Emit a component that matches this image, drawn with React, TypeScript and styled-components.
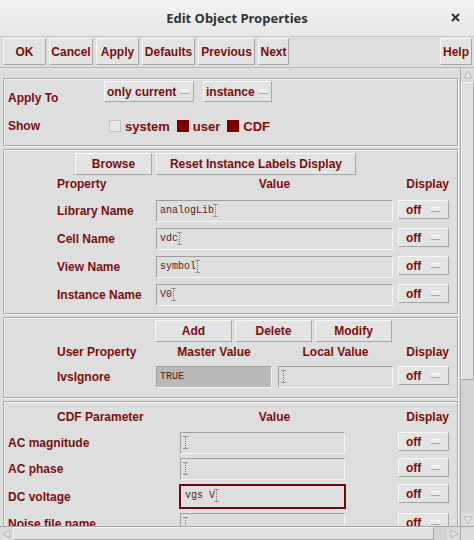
import styled, { createGlobalStyle } from "styled-components";

const RED = "#7a0e0e";
const PANEL = "#dedede";

const GlobalStyle = createGlobalStyle`
  html, body {
    margin: 0;
    padding: 0;
    background: ${PANEL};
  }
  body {
    font-family: "Liberation Sans", Arial, sans-serif;
  }
`;

const toolButtons: [string, number][] = [
  ["OK", 43],
  ["Cancel", 44],
  ["Apply", 43],
  ["Defaults", 53],
  ["Previous", 57],
  ["Next", 31],
];

const instanceRows = [
  { label: "Library Name", value: "analogLib" },
  { label: "Cell Name", value: "vdc" },
  { label: "View Name", value: "symbol" },
  { label: "Instance Name", value: "V0" },
];

const cdfRows = [
  { label: "AC magnitude", value: "", focused: false },
  { label: "AC phase", value: "", focused: false },
  { label: "DC voltage", value: "vgs V", focused: true },
  { label: "Noise file name", value: "", focused: false },
];

const Arrow = ({ dir }: { dir: "up" | "down" | "left" | "right" }) => {
  const pts = {
    up: "2,9 6,2 10,9",
    down: "2,3 6,10 10,3",
    left: "9,2 2,6 9,10",
    right: "3,2 10,6 3,10",
  }[dir];
  return (
    <svg width="12" height="12" viewBox="0 0 12 12">
      <polygon points={pts} fill="#e4e4e4" stroke="#b4b4b4" strokeWidth="1" />
    </svg>
  );
};

const Cursor = () => <IBeam />;

const App = () => {
  return (
    <Window>
      <GlobalStyle />
      <TitleBar>
        <Title>Edit Object Properties</Title>
        <Close>
          <svg width="9" height="9" viewBox="0 0 9 9">
            <path d="M1 1 L8 8 M8 1 L1 8" stroke="#2e3436" strokeWidth="2" />
          </svg>
        </Close>
      </TitleBar>

      <Toolbar>
        {toolButtons.map(([label, w]) => (
          <ToolButton key={label} $w={w}>
            {label}
          </ToolButton>
        ))}
        <ToolButton $w={32} $push>
          Help
        </ToolButton>
      </Toolbar>

      <Body>
        <Viewport>
          <Section $h={68}>
            <ApplyRow>
              <ApplyLabel>Apply To</ApplyLabel>
              <Combo $w={90}>
                only current
                <ComboMark />
              </Combo>
              <Combo $w={69} $gap={9}>
                instance
                <ComboMark />
              </Combo>
            </ApplyRow>
            <ShowRow>
              <ShowLabel>Show</ShowLabel>
              <Check>
                <Box />
                system
              </Check>
              <Check>
                <Box $on />
                user
              </Check>
              <Check>
                <Box $on />
                CDF
              </Check>
            </ShowRow>
          </Section>

          <Section $h={165}>
            <ButtonRow $pad={71} $gap={4} $top={3}>
              <PanelButton $w={77}>Browse</PanelButton>
              <PanelButton $w={200}>Reset Instance Labels Display</PanelButton>
            </ButtonRow>
            <HeaderRow>
              <HeadLabel>Property</HeadLabel>
              <HeadValue>Value</HeadValue>
              <HeadDisplay>Display</HeadDisplay>
            </HeaderRow>
            <Rows $gap={6} $top={6}>
              {instanceRows.map((r) => (
                <PropRow key={r.label}>
                  <RowLabel>{r.label}</RowLabel>
                  <Field $w={237}>
                    {r.value}
                    <Cursor />
                  </Field>
                  <OffButton>
                    off
                    <ComboMark />
                  </OffButton>
                </PropRow>
              ))}
            </Rows>
          </Section>

          <Section $h={81}>
            <ButtonRow $pad={151} $gap={3} $top={2}>
              <PanelButton $w={77}>Add</PanelButton>
              <PanelButton $w={77}>Delete</PanelButton>
              <PanelButton $w={77}>Modify</PanelButton>
            </ButtonRow>
            <UserHeader>
              <HeadLabel>User Property</HeadLabel>
              <HeadValue>Master Value</HeadValue>
              <HeadValue>Local Value</HeadValue>
              <HeadDisplay>Display</HeadDisplay>
            </UserHeader>
            <Rows $gap={0} $top={4}>
              <UserRow>
                <RowLabel>lvsIgnore</RowLabel>
                <Field $w={116} $disabled>
                  TRUE
                </Field>
                <Field $w={115}>
                  <Cursor />
                </Field>
                <OffButton>
                  off
                  <ComboMark />
                </OffButton>
              </UserRow>
            </Rows>
          </Section>

          <Section $h={140}>
            <HeaderRow $top={6}>
              <HeadLabel>CDF Parameter</HeadLabel>
              <HeadValue>Value</HeadValue>
              <HeadDisplay>Display</HeadDisplay>
            </HeaderRow>
            <Rows $gap={4} $top={5}>
              {cdfRows.map((r) => (
                <CdfRow key={r.label}>
                  <CdfLabel>{r.label}</CdfLabel>
                  <Field $w={165} $focused={r.focused}>
                    {r.value}
                    <Cursor />
                  </Field>
                  <OffButton>
                    off
                    <ComboMark />
                  </OffButton>
                </CdfRow>
              ))}
            </Rows>
          </Section>
        </Viewport>

        <VScroll>
          <ArrowBox>
            <Arrow dir="up" />
          </ArrowBox>
          <VThumb />
          <Track />
          <ArrowBox>
            <Arrow dir="down" />
          </ArrowBox>
        </VScroll>
      </Body>

      <HScroll>
        <ArrowBox>
          <Arrow dir="left" />
        </ArrowBox>
        <HThumb />
        <Track />
        <ArrowBox>
          <Arrow dir="right" />
        </ArrowBox>
        <Corner />
      </HScroll>
    </Window>
  );
};

export default App;

// window frame
const Window = styled.div`
  width: 474px;
  height: 540px;
  display: flex;
  flex-direction: column;
  overflow: hidden;
  background: ${PANEL};
  color: ${RED};
  font-size: 12px;
  font-weight: bold;
`;

const TitleBar = styled.header`
  height: 36px;
  flex-shrink: 0;
  display: flex;
  align-items: center;
  justify-content: center;
  position: relative;
  background: linear-gradient(#f2f2f2, #e8e8e8);
  border-bottom: 1px solid #c6c6c6;
`;

const Title = styled.h1`
  margin: 0;
  font-family: "Noto Sans", "DejaVu Sans", sans-serif;
  font-size: 13px;
  font-weight: bold;
  color: #2e3436;
`;

const Close = styled.div`
  position: absolute;
  right: 14px;
  top: 13px;
  display: flex;
`;

const Toolbar = styled.div`
  height: 30px;
  flex-shrink: 0;
  display: flex;
  gap: 3px;
  padding: 1px 2px 0 3px;
  box-sizing: border-box;
`;

const raised = `
  background: #e3e3e3;
  border: 1px solid;
  border-color: #f7f7f7 #a4a4a4 #a4a4a4 #f7f7f7;
  box-sizing: border-box;
  display: flex;
  align-items: center;
  color: ${RED};
  font-weight: bold;
`;

const ToolButton = styled.div<{ $w: number; $push?: boolean }>`
  ${raised}
  width: ${(p) => p.$w}px;
  height: 27px;
  justify-content: center;
  margin-left: ${(p) => (p.$push ? "auto" : "0")};
`;

const Body = styled.div`
  flex: 1;
  display: flex;
  min-height: 0;
  border-top: 1px solid #b8b8b8;
`;

const Viewport = styled.div`
  flex: 1;
  overflow: hidden;
  display: flex;
  flex-direction: column;
  gap: 3px;
  padding: 10px 2px 0 3px;
`;

// sections
const Section = styled.section<{ $h: number }>`
  height: ${(p) => p.$h}px;
  flex-shrink: 0;
  box-sizing: border-box;
  border: 1px solid #a8a8a8;
  box-shadow: inset 1px 1px 0 #f4f4f4, 1px 1px 0 #f4f4f4;
  overflow: hidden;
`;

const ApplyRow = styled.div`
  display: flex;
  align-items: flex-start;
  padding: 2px 0 0 4px;
`;

const ApplyLabel = styled.span`
  width: 96px;
  margin-top: 9px;
  line-height: 16px;
`;

const Combo = styled.div<{ $w: number; $gap?: number }>`
  ${raised}
  width: ${(p) => p.$w}px;
  height: 21px;
  padding-left: 2px;
  gap: 4px;
  margin-left: ${(p) => p.$gap ?? 0}px;
`;

const ComboMark = styled.span`
  width: 9px;
  height: 3px;
  background: #ececec;
  border-top: 1px solid #fafafa;
  border-bottom: 1px solid #a8a8a8;
`;

const ShowRow = styled.div`
  display: flex;
  align-items: center;
  height: 22px;
  margin-top: 9px;
  padding-left: 4px;
  gap: 7px;
`;

const ShowLabel = styled.span`
  width: 94px;
`;

const Check = styled.span`
  display: flex;
  align-items: center;
  gap: 4px;
  font-size: 13px;
`;

const Box = styled.span<{ $on?: boolean }>`
  width: 10px;
  height: 10px;
  background: ${(p) => (p.$on ? "#7a0000" : "#e6e6e6")};
  border: 1px solid ${(p) => (p.$on ? "#7a0000" : "#c4c4c4")};
`;

const ButtonRow = styled.div<{ $pad: number; $gap: number; $top: number }>`
  display: flex;
  gap: ${(p) => p.$gap}px;
  padding-left: ${(p) => p.$pad}px;
  margin-top: ${(p) => p.$top}px;
`;

const PanelButton = styled.div<{ $w: number }>`
  ${raised}
  width: ${(p) => p.$w}px;
  height: 22px;
  justify-content: center;
`;

const HeaderRow = styled.div<{ $top?: number }>`
  display: grid;
  grid-template-columns: 152px 237px 56px;
  height: 19px;
  line-height: 19px;
  margin-top: ${(p) => p.$top ?? 0}px;
`;

const UserHeader = styled.div`
  display: grid;
  grid-template-columns: 152px 116px 6px 115px 56px;
  height: 20px;
  line-height: 20px;
  & > :nth-child(3) {
    grid-column: 4;
  }
`;

const HeadLabel = styled.span`
  padding-left: 53px;
  white-space: nowrap;
`;

const HeadValue = styled.span`
  text-align: center;
  white-space: nowrap;
`;

const HeadDisplay = styled.span`
  text-align: right;
`;

const Rows = styled.div<{ $gap: number; $top: number }>`
  display: flex;
  flex-direction: column;
  gap: ${(p) => p.$gap}px;
  margin-top: ${(p) => p.$top}px;
`;

const PropRow = styled.div`
  display: grid;
  grid-template-columns: 152px 242px 51px;
  align-items: start;
`;

const UserRow = styled.div`
  display: grid;
  grid-template-columns: 152px 122px 120px 51px;
  align-items: start;
`;

const CdfRow = styled.div`
  display: grid;
  grid-template-columns: 176px 218px 51px;
  align-items: start;
`;

const RowLabel = styled.span`
  align-self: center;
  padding-left: 53px;
  white-space: nowrap;
`;

const CdfLabel = styled.span`
  align-self: center;
  padding-left: 4px;
  white-space: nowrap;
`;

const Field = styled.div<{ $w: number; $disabled?: boolean; $focused?: boolean }>`
  width: ${(p) => p.$w + (p.$focused ? 2 : 0)}px;
  height: ${(p) => (p.$focused ? 25 : 22)}px;
  margin-left: ${(p) => (p.$focused ? -1 : 0)}px;
  box-sizing: border-box;
  background: ${(p) => (p.$disabled ? "#b9b9b9" : PANEL)};
  border: ${(p) => (p.$focused ? 2 : 1)}px solid;
  border-color: ${(p) =>
    p.$focused ? "#6b0c0c" : "#9e9e9e #f4f4f4 #f4f4f4 #9e9e9e"};
  padding: ${(p) => (p.$focused ? "3px 3px 0 4px" : "3px 3px 0 3px")};
  font-family: "Liberation Mono", "Courier New", monospace;
  font-size: 10px;
  font-weight: normal;
  line-height: 13px;
  color: #5c1c1c;
  white-space: pre;
  display: flex;
  align-items: flex-start;
`;

const IBeam = styled.span`
  position: relative;
  width: 5px;
  height: 13px;
  margin-left: -1px;
  &::before {
    content: "";
    position: absolute;
    left: 2px;
    top: 1px;
    bottom: 1px;
    border-left: 1px dotted #8a6a6a;
  }
  &::after {
    content: "";
    position: absolute;
    left: 0;
    right: 0;
    top: 0;
    bottom: 0;
    border-top: 1px solid #a89090;
    border-bottom: 1px solid #a89090;
  }
`;

const OffButton = styled.div`
  ${raised}
  width: 51px;
  height: 19px;
  padding-left: 7px;
  gap: 10px;
  font-size: 12px;
`;

// scrollbars
const VScroll = styled.div`
  width: 13px;
  flex-shrink: 0;
  display: flex;
  flex-direction: column;
  background: #d2d2d2;
  border-left: 1px solid #a4a4a4;
`;

const ArrowBox = styled.div`
  width: 13px;
  height: 13px;
  flex-shrink: 0;
  display: flex;
  align-items: center;
  justify-content: center;
  background: #dcdcdc;
`;

const VThumb = styled.div`
  height: 298px;
  margin-top: 1px;
  flex-shrink: 0;
  background: #e0e0e0;
  border: 1px solid;
  border-color: #f6f6f6 #a6a6a6 #a6a6a6 #f6f6f6;
  box-sizing: border-box;
`;

const Track = styled.div`
  flex: 1;
  background: #d2d2d2;
`;

const HScroll = styled.div`
  height: 13px;
  flex-shrink: 0;
  display: flex;
  background: #d2d2d2;
  border-top: 1px solid #a4a4a4;
`;

const HThumb = styled.div`
  width: 421px;
  flex-shrink: 0;
  background: #e0e0e0;
  border: 1px solid;
  border-color: #f6f6f6 #a6a6a6 #a6a6a6 #f6f6f6;
  box-sizing: border-box;
`;

const Corner = styled.div`
  width: 13px;
  flex-shrink: 0;
  background: #dcdcdc;
  border-left: 1px solid #a4a4a4;
`;
